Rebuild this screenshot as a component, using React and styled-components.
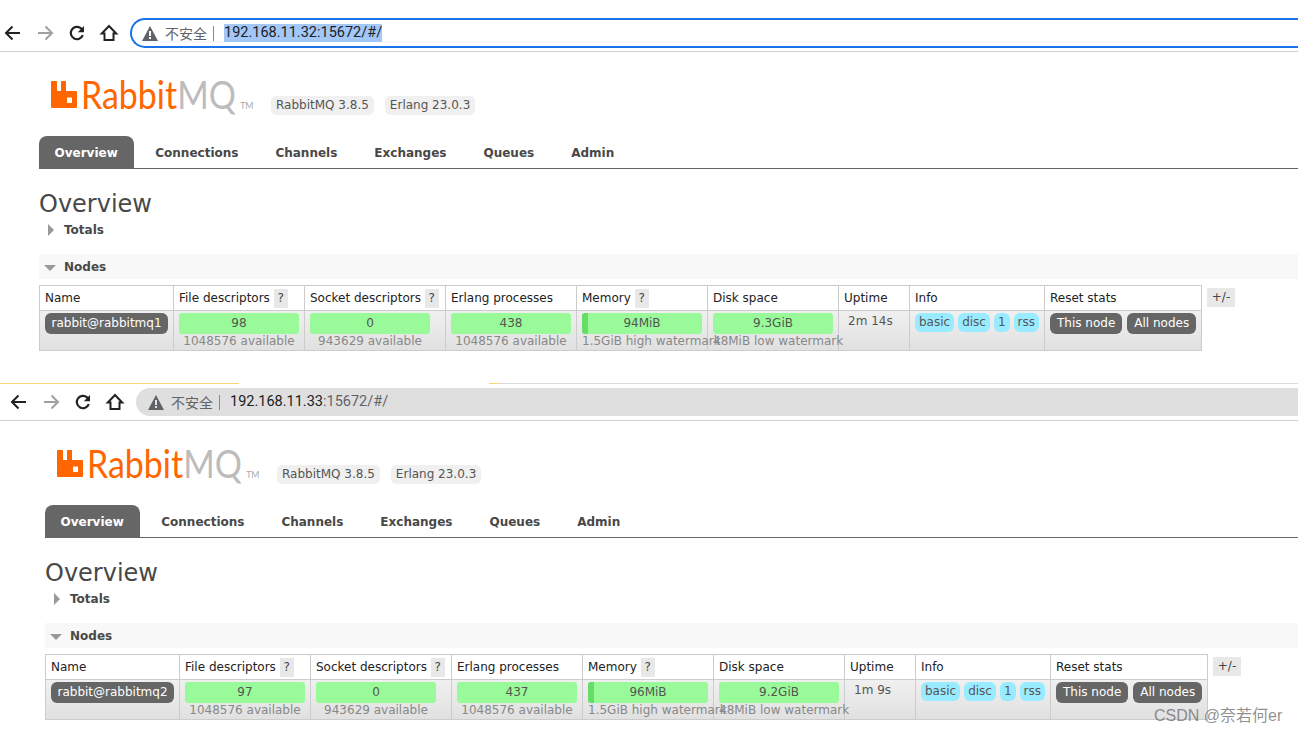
import styled, { createGlobalStyle } from "styled-components";

const GlobalStyle = createGlobalStyle`
  html, body {
    margin: 0;
    padding: 0;
    background: #fff;
  }
  body {
    font-family: "DejaVu Sans", Verdana, sans-serif;
    font-size: 12px;
    color: #484848;
    overflow: hidden;
  }
`;

const Page = styled.div`
  position: relative;
  width: 1298px;
  height: 733px;
  overflow: hidden;
`;

const Window = styled.section`
  padding-top: ${(p) => (p.$focused ? "15px" : "0")};
  height: ${(p) => (p.$focused ? "383px" : "350px")};
  box-sizing: border-box;
`;

const TopLine = styled.div`
  height: 1px;
  background: linear-gradient(to right, #f8d878 0 239px, #fff 239px 489px, #f8d878 489px 500px, #dcdcdc 500px);
`;

const BrowserBar = styled.div`
  height: 37px;
  box-sizing: border-box;
  display: flex;
  align-items: center;
  padding-left: ${(p) => p.$indent}px;
  border-bottom: 1px solid #cfcfcf;
`;

const NavIcon = styled.svg`
  width: 20px;
  height: 20px;
  margin-right: ${(p) => p.$gap}px;
  flex: none;
  fill: none;
  stroke: ${(p) => (p.$muted ? "#a0a0a0" : "#222")};
  stroke-width: 2;
`;

const AddressBar = styled.div`
  flex: 1;
  height: ${(p) => (p.$focused ? "30px" : "28px")};
  display: flex;
  align-items: center;
  box-sizing: border-box;
  padding-left: ${(p) => (p.$focused ? "10px" : "12px")};
  border-radius: 15px 0 0 15px;
  background: ${(p) => (p.$focused ? "#fff" : "#dfdfdf")};
  border: ${(p) => (p.$focused ? "2px solid #1a73e8" : "none")};
  border-right: none;
  font-family: "Noto Sans CJK SC", "Liberation Sans", sans-serif;
`;

const WarnIcon = styled.svg`
  width: 16px;
  height: 15px;
  flex: none;
  fill: #5f6368;
`;

const NotSecure = styled.span`
  margin-left: 7px;
  font-size: 14px;
  color: #5f6368;
  padding-right: 6px;
  border-right: 1px solid #8a8a8a;
  line-height: 15px;
`;

const UrlText = styled.span`
  margin-left: 10px;
  font-family: "Roboto", "Liberation Sans", sans-serif;
  font-size: 14.5px;
  line-height: 18px;
  color: #202124;
  background: ${(p) => (p.$selected ? "#a3c7f7" : "transparent")};
`;

const UrlRest = styled.span`
  color: ${(p) => (p.$dim ? "#5f6368" : "inherit")};
`;

const Content = styled.div`
  padding-left: ${(p) => p.$indent}px;
`;

const Header = styled.div`
  height: 84px;
  display: flex;
  align-items: flex-start;
`;

const Logo = styled.div`
  display: flex;
  align-items: flex-end;
  margin: 28px 0 0 12px;
  height: 28px;
  width: 220px;
`;

const LogoMark = styled.svg`
  width: 26px;
  height: 27px;
  flex: none;
  fill: #ff6600;
`;

const LogoWord = styled.span`
  display: inline-block;
  margin: 0 0 -2px 4px;
  font-family: "Lato", "Open Sans", sans-serif;
  font-size: 39px;
  font-weight: 400;
  line-height: 28px;
  white-space: nowrap;
  transform: scaleX(0.87);
  transform-origin: left bottom;
`;

const LogoOrange = styled.span`
  color: #ff6600;
`;

const LogoGrey = styled.span`
  color: #bcbcbc;
`;

const LogoTm = styled.span`
  font-size: 10px;
  line-height: 1;
  color: #a8a8a8;
  margin-left: 5px;
`;

const Badges = styled.div`
  display: flex;
  gap: 11px;
  margin-top: 44px;
`;

const Badge = styled.span`
  height: 19px;
  line-height: 19px;
  padding: 0 5px;
  font-size: 12px;
  border-radius: 5px;
  background: #f0f0f0;
  color: #555;
`;

const Tabs = styled.nav`
  display: flex;
  height: 32px;
  border-bottom: 1px solid #666;
`;

const Tab = styled.a`
  display: block;
  padding: ${(p) => (p.$active ? "0 16px 0 15.5px" : "0 18.5px")};
  margin-right: ${(p) => (p.$active ? "3px" : "0")};
  line-height: 34px;
  font-size: 12px;
  font-weight: 700;
  color: ${(p) => (p.$active ? "#fff" : "#484848")};
  background: ${(p) => (p.$active ? "#666" : "transparent")};
  border-radius: 8px 8px 0 0;
`;

const Title = styled.h1`
  margin: 21px 0 0;
  height: 28px;
  line-height: 28px;
  font-size: 24px;
  font-weight: 400;
  color: #484848;
`;

const Toggle = styled.div`
  display: flex;
  align-items: center;
  font-size: 12px;
  font-weight: 700;
  color: #484848;
`;

const Totals = styled(Toggle)`
  height: 20px;
  margin-top: 2px;
  padding-left: 9px;
`;

const NodesBand = styled(Toggle)`
  height: 25px;
  margin-top: 14px;
  padding-left: 5px;
  background: #f8f8f8;
`;

const ArrowRight = styled.i`
  width: 0;
  height: 0;
  margin-right: 10px;
  border-left: 6px solid #999;
  border-top: 6px solid transparent;
  border-bottom: 6px solid transparent;
`;

const ArrowDown = styled.i`
  width: 0;
  height: 0;
  margin: 2px 8px 0 0;
  border-top: 6px solid #999;
  border-left: 6px solid transparent;
  border-right: 6px solid transparent;
`;

const TableRow = styled.div`
  display: flex;
  align-items: flex-start;
  margin-top: 6px;
`;

const NodesTable = styled.table`
  width: 1162px;
  table-layout: fixed;
  border-collapse: collapse;
  font-size: 12px;
  border: 1px solid #ccc;
`;

const HeadCell = styled.th`
  height: 25px;
  padding: 0 5px;
  box-sizing: border-box;
  text-align: left;
  font-weight: 400;
  white-space: nowrap;
  color: #222;
  border: 1px solid #ccc;
`;

const Help = styled.span`
  display: inline-block;
  width: 14px;
  height: 19px;
  line-height: 19px;
  text-align: center;
  background: #e8e8e8;
  color: #444;
`;

const BodyRow = styled.tr`
  background: linear-gradient(to bottom, #f0f0f0, #e0e0e0);
`;

const Cell = styled.td`
  height: 40px;
  padding: 2px 5px 0;
  box-sizing: border-box;
  vertical-align: top;
  white-space: nowrap;
  border: 1px solid #ccc;
`;

const UptimeCell = styled(Cell)`
  padding: 3px 0 0 9px;
  color: #555;
`;

const DarkPill = styled.span`
  display: inline-block;
  height: 21px;
  line-height: 21px;
  padding: 0 ${(p) => (p.$wide ? "6.5px" : "7px")};
  border-radius: 6px;
  background: #666;
  color: #fff;
  font-size: 12px;
  & + & {
    margin-left: 5px;
  }
`;

const Bar = styled.div`
  position: relative;
  width: 120px;
  height: 21px;
  line-height: 21px;
  text-align: center;
  border-radius: 3px;
  overflow: hidden;
  color: #555;
  background: #99fa99;
`;

const BarFill = styled.i`
  position: absolute;
  left: 0;
  top: 0;
  bottom: 0;
  background: #66dd66;
`;

const BarLabel = styled.span`
  position: relative;
`;

const Sub = styled.div`
  height: 16px;
  line-height: 15px;
  width: 120px;
  text-align: ${(p) => (p.$left ? "left" : "center")};
  font-size: 12px;
  color: #888;
`;

const Tags = styled.div`
  display: flex;
  gap: 4px;
`;

const Tag = styled.span`
  height: 19px;
  line-height: 19px;
  padding: 0 4px;
  border-radius: 6px;
  background: #99ebff;
  color: #555;
`;

const PlusMinus = styled.span`
  width: 28px;
  height: 19px;
  margin: 3px 0 0 5px;
  line-height: 19px;
  text-align: center;
  background: #e8e8e8;
  color: #444;
`;

const Watermark = styled.div`
  position: absolute;
  left: 1154px;
  top: 705px;
  font-family: "Liberation Sans", "Noto Sans CJK SC", sans-serif;
  font-size: 16px;
  line-height: 21px;
  white-space: nowrap;
  color: rgba(100, 100, 100, 0.72);
`;

const COLUMNS = [134, 131, 141, 131, 131, 131, 71, 135, 157];

const TABS = ["Overview", "Connections", "Channels", "Exchanges", "Queues", "Admin"];

const WINDOWS = [
  {
    focused: true,
    indent: 39,
    node: "rabbit@rabbitmq1",
    fd: "98",
    procs: "438",
    memory: "94MiB",
    disk: "9.3GiB",
    uptime: "2m 14s",
    url: "192.168.11.32",
  },
  {
    focused: false,
    indent: 45,
    node: "rabbit@rabbitmq2",
    fd: "97",
    procs: "437",
    memory: "96MiB",
    disk: "9.2GiB",
    uptime: "1m 9s",
    url: "192.168.11.33",
  },
];

function NavIcons() {
  return (
    <>
      <NavIcon $gap={12} viewBox="0 0 20 20">
        <path d="M17 10H3.500M9.500 3.500 3 10l6.500 6.500" />
      </NavIcon>
      <NavIcon $gap={12} $muted viewBox="0 0 20 20">
        <path d="M3 10h13.500M10.500 3.500 17 10l-6.500 6.500" />
      </NavIcon>
      <NavIcon $gap={12} viewBox="0 0 20 20">
        <path d="M15.800 12.200A6.200 6.200 0 1 1 14 5.300L15.500 7" strokeWidth="2.200" />
        <path d="M17 3v6.200h-6.200z" fill="#222" stroke="none" />
      </NavIcon>
      <NavIcon $gap={11} viewBox="0 0 20 20">
        <path d="M10 3 2.800 10.500H5.500V17h9v-6.500h2.700z" />
      </NavIcon>
    </>
  );
}

function RabbitLogo() {
  return (
    <Logo>
      <LogoMark viewBox="0 0 26 27">
        <path
          fillRule="evenodd"
          d="M1 0h4.500a.5.5 0 0 1 .5.5V10h4V.5a.5.5 0 0 1 .5-.5h4a.5.5 0 0 1 .5.5V10h10a1 1 0 0 1 1 1v15a1 1 0 0 1-1 1H1a1 1 0 0 1-1-1V1a1 1 0 0 1 1-1zM16 16.500V22h5v-5.500z"
        />
      </LogoMark>
      <LogoWord>
        <LogoOrange>Rabbit</LogoOrange>
        <LogoGrey>MQ</LogoGrey>
        <LogoTm>TM</LogoTm>
      </LogoWord>
    </Logo>
  );
}

function NodeTable({ data }) {
  return (
    <TableRow>
      <NodesTable>
        <colgroup>
          {COLUMNS.map((w, i) => (
            <col key={i} width={w} />
          ))}
        </colgroup>
        <thead>
          <tr>
            <HeadCell>Name</HeadCell>
            <HeadCell>
              File descriptors <Help>?</Help>
            </HeadCell>
            <HeadCell>
              Socket descriptors <Help>?</Help>
            </HeadCell>
            <HeadCell>Erlang processes</HeadCell>
            <HeadCell>
              Memory <Help>?</Help>
            </HeadCell>
            <HeadCell>Disk space</HeadCell>
            <HeadCell>Uptime</HeadCell>
            <HeadCell>Info</HeadCell>
            <HeadCell>Reset stats</HeadCell>
          </tr>
        </thead>
        <tbody>
          <BodyRow>
            <Cell>
              <DarkPill $wide>{data.node}</DarkPill>
            </Cell>
            <Cell>
              <Bar>{data.fd}</Bar>
              <Sub>1048576 available</Sub>
            </Cell>
            <Cell>
              <Bar>0</Bar>
              <Sub>943629 available</Sub>
            </Cell>
            <Cell>
              <Bar>{data.procs}</Bar>
              <Sub>1048576 available</Sub>
            </Cell>
            <Cell>
              <Bar>
                <BarFill style={{ width: "6px" }} />
                <BarLabel>{data.memory}</BarLabel>
              </Bar>
              <Sub $left>1.5GiB high watermark</Sub>
            </Cell>
            <Cell>
              <Bar>{data.disk}</Bar>
              <Sub $left>48MiB low watermark</Sub>
            </Cell>
            <UptimeCell>{data.uptime}</UptimeCell>
            <Cell>
              <Tags>
                <Tag>basic</Tag>
                <Tag>disc</Tag>
                <Tag>1</Tag>
                <Tag>rss</Tag>
              </Tags>
            </Cell>
            <Cell>
              <DarkPill>This node</DarkPill>
              <DarkPill>All nodes</DarkPill>
            </Cell>
          </BodyRow>
        </tbody>
      </NodesTable>
      <PlusMinus>+/-</PlusMinus>
    </TableRow>
  );
}

function RabbitWindow({ data }) {
  const { focused, indent, url } = data;
  return (
    <Window $focused={focused}>
      {!focused && <TopLine />}
      <BrowserBar $indent={indent - 36}>
        <NavIcons />
        <AddressBar $focused={focused}>
          <WarnIcon viewBox="0 0 16 15">
            <path
              fillRule="evenodd"
              d="M8 0 16 15H0zM7 5v5h2V5zM7 11v2h2v-2z"
            />
          </WarnIcon>
          <NotSecure>不安全</NotSecure>
          <UrlText $selected={focused}>
            {url}
            <UrlRest $dim={!focused}>:15672/#/</UrlRest>
          </UrlText>
        </AddressBar>
      </BrowserBar>
      <Content $indent={indent}>
        <Header>
          <RabbitLogo />
          <Badges>
            <Badge>RabbitMQ 3.8.5</Badge>
            <Badge>Erlang 23.0.3</Badge>
          </Badges>
        </Header>
        <Tabs>
          {TABS.map((t, i) => (
            <Tab key={t} $active={i === 0}>
              {t}
            </Tab>
          ))}
        </Tabs>
        <Title>Overview</Title>
        <Totals>
          <ArrowRight />
          Totals
        </Totals>
        <NodesBand>
          <ArrowDown />
          Nodes
        </NodesBand>
        <NodeTable data={data} />
      </Content>
    </Window>
  );
}

export default function App() {
  return (
    <Page>
      <GlobalStyle />
      {WINDOWS.map((w) => (
        <RabbitWindow key={w.node} data={w} />
      ))}
      <Watermark>CSDN @奈若何er</Watermark>
    </Page>
  );
}
